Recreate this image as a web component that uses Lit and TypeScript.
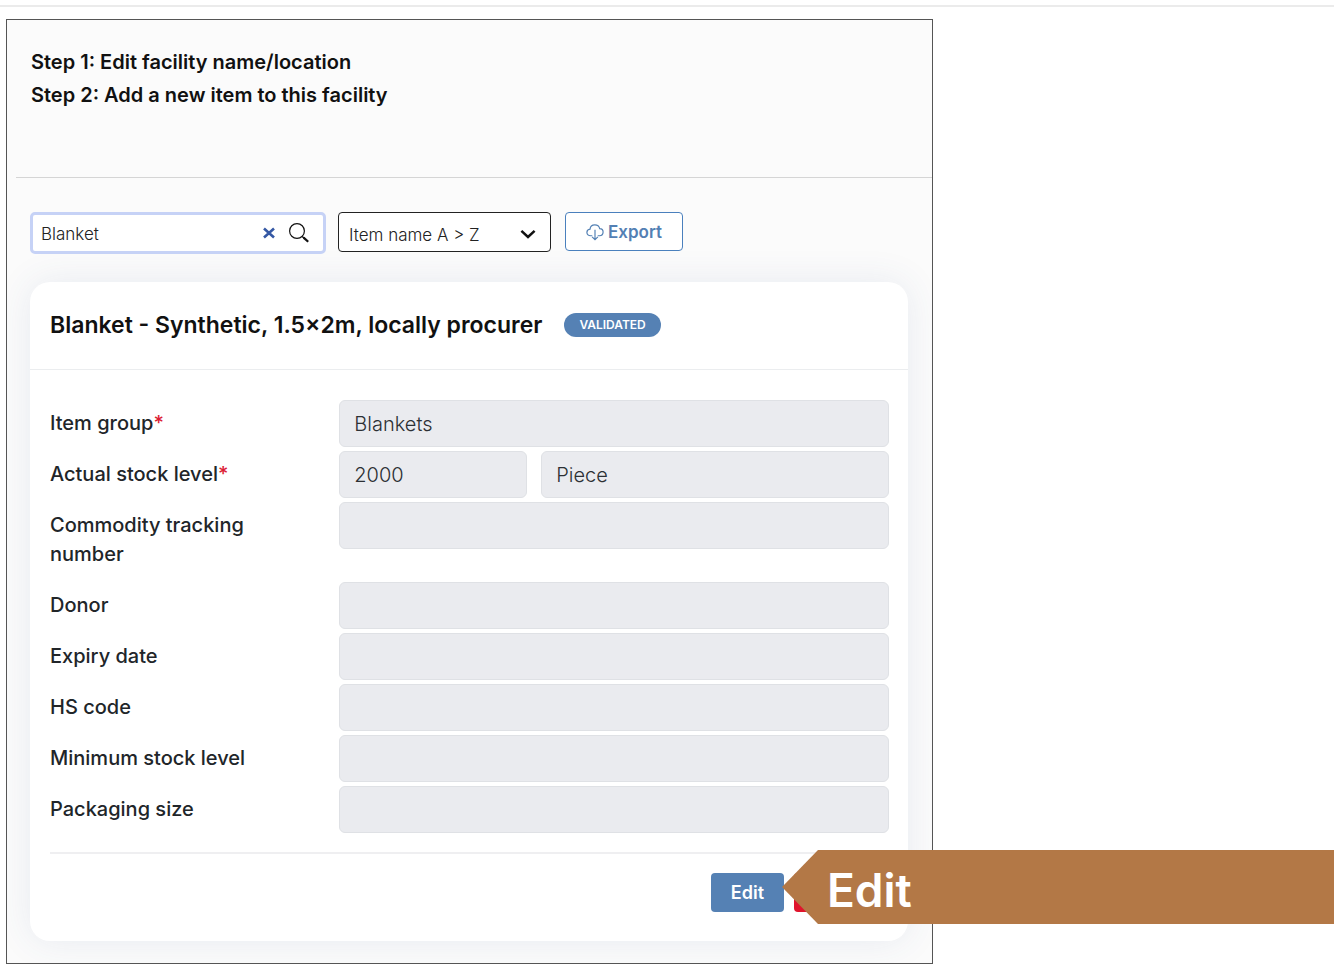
import { LitElement, html, css, svg } from "lit";
import { customElement, property, state } from "lit/decorators.js";

interface Field {
  id: string;
  label: string;
  required?: boolean;
  values: string[];
}

const FIELDS: Field[] = [
  { id: "group", label: "Item group", required: true, values: ["Blankets"] },
  { id: "stock", label: "Actual stock level", required: true, values: ["2000", "Piece"] },
  { id: "tracking", label: "Commodity tracking number", values: [""] },
  { id: "donor", label: "Donor", values: [""] },
  { id: "expiry", label: "Expiry date", values: [""] },
  { id: "hs", label: "HS code", values: [""] },
  { id: "minimum", label: "Minimum stock level", values: [""] },
  { id: "packaging", label: "Packaging size", values: [""] },
];

const strokeIcon = (size: number, body: unknown) => html`
  <svg width=${size} height=${size} viewBox="0 0 20 20" fill="none" stroke="currentColor" aria-hidden="true">${body}</svg>
`;

const clearIcon = strokeIcon(20, svg`<path d="M5 5.500l10 9M15 5.500l-10 9" stroke-width="2.6"/>`);
const searchIcon = strokeIcon(20, svg`
  <circle cx="8" cy="8" r="7.4" stroke-width="1.2"/>
  <path d="M13.2 13.4l2 1.8" stroke-width="1.4"/>
  <path d="M14.6 14.6l4.6 4.2" stroke-width="2.2"/>`);
const chevronIcon = strokeIcon(20, svg`<path d="M3.4 6.8l6.6 6.2 6.6-6.2" stroke-width="2.5"/>`);
const cloudIcon = strokeIcon(18, svg`
  <path d="M7 14.2H5.2C2.7 14.2 1 12.6 1 10.5c0-2 1.5-3.5 3.5-3.7C4.7 4 7 2 9.800 2c2.700 0 4.900 1.700 5.400 4.200 2.200.1 3.800 1.800 3.800 3.900 0 2.300-1.700 4.100-4 4.100H13" stroke-width="1.300"/>
  <path d="M10 7.500v11M6.800 15.400l3.200 3.200 3.200-3.200" stroke-width="1.300"/>`);

@customElement("stock-field")
class StockField extends LitElement {
  @property({ attribute: false }) field!: Field;

  static styles = css`
    :host { display: block; }
    .row { display: grid; grid-template-columns: 289fr 549fr; align-items: start; }
    .label {
      padding: 9px 56px 9px 0;
      font-size: 20px; line-height: 29px; font-weight: 500; color: #212529;
    }
    .required { color: #dc1c34; }
    .inputs { display: grid; gap: 14px; }
    .pair { grid-template-columns: 188fr 348fr; }
    .input {
      box-sizing: border-box; width: 100%; min-width: 0; height: 47px; padding: 0 14px;
      border: 1px solid #dfe1e5; border-radius: 6px; background: #eaebef;
      font: 300 20px/29px Inter, sans-serif; color: #2c3034;
    }
  `;

  render() {
    const { id, label, required, values } = this.field;
    return html`
      <div class="row">
        <label class="label" for=${id}>${label}${required ? html`<span class="required">*</span>` : ""}</label>
        <div class="inputs ${values.length > 1 ? "pair" : ""}">
          ${values.map((value, i) => html`
            <input class="input" id=${i ? `${id}-unit` : id} aria-label=${i ? "Unit" : label} .value=${value} readonly>
          `)}
        </div>
      </div>
    `;
  }
}

@customElement("app-root")
class AppRoot extends LitElement {
  @state() private query = "Blanket";

  static styles = css`
    :host { display: block; font-family: Inter, sans-serif; color: #111; background: #fff; }
    button { font-family: inherit; cursor: pointer; }
    .rule { height: 2px; margin: 5px 0 12px; border: 0; background: #ebebeb; }
    .page { display: grid; grid-template-columns: 927fr 401fr; padding: 0 0 4px 6px; }
    .panel { min-width: 0; border: 1px solid #555; background: #fbfbfb; overflow: hidden; }
    .steps {
      margin-left: 9px; padding: 26px 15px 65px; border-bottom: 1px solid #d5d5d5;
      font-size: 20px; line-height: 33px; font-weight: 600;
    }
    .step { margin: 0; }
    .body { padding: 34px 24px 22px 23px; }
    .toolbar { display: flex; align-items: flex-start; gap: 12px; margin-bottom: 28px; }
    .search {
      box-sizing: border-box; display: flex; align-items: center; flex: 0 1 296px; min-width: 0;
      height: 42px; padding: 0 14px 0 8px; border: 3px solid #c6d2f6; border-radius: 5px; background: #fff;
    }
    .search-input {
      flex: 1; width: 100%; min-width: 0; padding: 2px 0 0; border: 0; outline: 0; background: none;
      font: 300 17px/28px Inter, sans-serif; color: #222;
    }
    .icon-button { display: flex; padding: 0; border: 0; background: none; color: #111; }
    .clear { margin-right: 10px; color: #3558a4; }
    .sort { position: relative; display: flex; flex: 0 1 213px; }
    .select {
      box-sizing: border-box; width: 100%; height: 40px; padding: 6px 36px 0 10px; appearance: none;
      border: 1px solid #222; border-radius: 4px; background: #fff;
      font: 300 17px/26px Inter, sans-serif; color: #222;
    }
    .chevron { position: absolute; right: 13px; top: 12px; display: flex; pointer-events: none; }
    .export {
      display: flex; align-items: center; justify-content: center; gap: 4px; height: 39px;
      margin-left: 2px; padding: 0 20px; border: 1px solid #4a80bd; border-radius: 4px;
      background: #fff; color: #5380b4; font-size: 17px; font-weight: 600;
    }
    .card { border-radius: 20px; background: #fff; box-shadow: 0 0 36px rgba(60, 90, 150, 0.1); }
    .card-head {
      display: flex; align-items: center; gap: 22px; padding: 26px 20px 27px;
      border-bottom: 1px solid #ebedef;
    }
    .title { margin: 0; font-size: 23px; line-height: 34px; font-weight: 600; }
    .badge {
      padding: 0 15px; border-radius: 12px; background: #5581b4; color: #fff;
      font-size: 12px; line-height: 24px; font-weight: 600;
    }
    .card-body { padding: 30px 19px 29px 20px; }
    .fields { display: grid; gap: 4px; }
    .actions {
      display: flex; justify-content: flex-end; gap: 10px; margin-top: 19px; padding-top: 19px;
      border-top: 2px solid #efeff1;
    }
    .button {
      height: 39px; padding: 0 20px; border: 0; border-radius: 4px; background: #5581b4;
      color: #fff; font-size: 18px; font-weight: 600;
    }
    .delete { width: 95px; background: #e0142c; }
    .callout {
      z-index: 1; align-self: end; margin: 0 0 40px -151px; padding: 6px 45px 0; background: #b37846;
      clip-path: polygon(0 37px, 36px 0, 100% 0, 100% 100%, 36px 100%);
      color: #fff; font-size: 46px; line-height: 68px; font-weight: 600;
    }
  `;

  private onInput(event: Event) {
    this.query = (event.target as HTMLInputElement).value;
  }

  private clear() {
    this.query = "";
  }

  render() {
    return html`
      <hr class="rule">
      <div class="page">
        <main class="panel">
          <header class="steps">
            <p class="step">Step 1: Edit facility name/location</p>
            <p class="step">Step 2: Add a new item to this facility</p>
          </header>
          <div class="body">
            <div class="toolbar">
              <div class="search">
                <input class="search-input" aria-label="Search items" .value=${this.query} @input=${this.onInput}>
                <button class="icon-button clear" aria-label="Clear search" @click=${this.clear}>${clearIcon}</button>
                <button class="icon-button" aria-label="Search">${searchIcon}</button>
              </div>
              <div class="sort">
                <select class="select" aria-label="Sort by">
                  <option>Item name A &gt; Z</option>
                </select>
                <span class="chevron">${chevronIcon}</span>
              </div>
              <button class="export">${cloudIcon}<span>Export</span></button>
            </div>
            <section class="card">
              <div class="card-head">
                <h2 class="title">Blanket - Synthetic, 1.5×2m, locally procurer</h2>
                <span class="badge">VALIDATED</span>
              </div>
              <div class="card-body">
                <div class="fields">
                  ${FIELDS.map((field) => html`<stock-field .field=${field}></stock-field>`)}
                </div>
                <div class="actions">
                  <button class="button">Edit</button>
                  <button class="button delete" aria-label="Delete"></button>
                </div>
              </div>
            </section>
          </div>
        </main>
        <aside class="callout">Edit</aside>
      </div>
    `;
  }
}
